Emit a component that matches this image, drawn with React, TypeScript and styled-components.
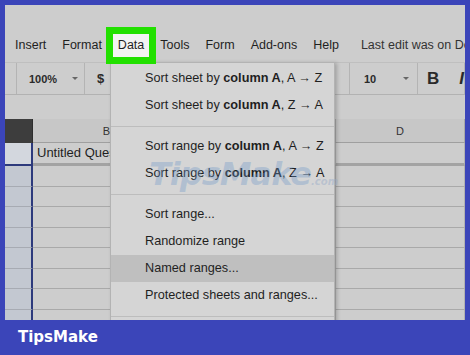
import React from 'react';
import styled, { createGlobalStyle } from 'styled-components';

const GlobalStyle = createGlobalStyle`
  html, body {
    margin: 0;
    padding: 0;
    background: #3b45b9;
  }
  body {
    font-family: 'Liberation Sans', Arial, sans-serif;
  }
`;

const Frame = styled.div`
  width: 470px;
  height: 355px;
  box-sizing: border-box;
  background: #3b45b9;
  padding: 5px 5px 0 5px;
  display: flex;
  flex-direction: column;
`;

const Screen = styled.div`
  position: relative;
  height: 315px;
  flex-shrink: 0;
  overflow: hidden;
  background: #cdcdcd;
  color: #1f1f1f;
  display: flex;
  flex-direction: column;
`;

const MenuBar = styled.div`
  height: 57px;
  flex-shrink: 0;
  box-sizing: border-box;
  padding: 23px 0 0 10px;
  display: flex;
  align-items: center;
  gap: 16px;
  font-size: 12.5px;
  white-space: nowrap;
`;

const MenuLabel = styled.span<{ $active?: boolean; $muted?: boolean }>`
  position: relative;
  z-index: 3;
  line-height: 23px;
  color: ${p => (p.$muted ? '#333' : '#1f1f1f')};
  margin-left: ${p => (p.$muted ? '6px' : '0')};
  ${p =>
    p.$active &&
    `
    border: 7px solid #22e000;
    background: #f3f3f3;
    padding: 0 5px;
    margin: 0 -12px;
  `}
`;

const Toolbar = styled.div`
  height: 33px;
  flex-shrink: 0;
  box-sizing: border-box;
  border-top: 1px solid #bfbfbf;
  border-bottom: 1px solid #b2b2b2;
  display: flex;
`;

const ToolGroup = styled.div<{ $w?: number; $pad?: number; $gap?: number }>`
  ${p => (p.$w ? `width: ${p.$w}px;` : 'flex: 1;')}
  flex-shrink: 0;
  box-sizing: border-box;
  border-right: 1px solid #b4b4b4;
  padding-left: ${p => p.$pad ?? 0}px;
  display: flex;
  align-items: center;
  gap: ${p => p.$gap ?? 0}px;
  white-space: nowrap;
`;

const ToolText = styled.span<{ $size: number; $italic?: boolean }>`
  font-size: ${p => p.$size}px;
  font-weight: bold;
  font-style: ${p => (p.$italic ? 'italic' : 'normal')};
  color: #2a2a2a;
`;

const FormulaBar = styled.div`
  height: 24px;
  flex-shrink: 0;
`;

const Sheet = styled.div`
  display: grid;
  grid-template-columns: 28px 148px 155px 1fr;
  grid-template-rows: 24px 23px repeat(8, 20.5px);
`;

const Corner = styled.div`
  background: #3d3d3d;
  border-right: 1px solid #2e2e2e;
`;

const ColHead = styled.div`
  background: #c7c7c7;
  border-right: 1px solid #a9a9a9;
  border-bottom: 1px solid #9f9f9f;
  box-sizing: border-box;
  display: flex;
  align-items: center;
  justify-content: center;
  font-size: 11px;
  color: #333;
`;

const RowNum = styled.div<{ $first?: boolean }>`
  background: ${p => (p.$first ? '#d3d7de' : '#c3c8d1')};
  border-right: 2px solid #2d3a7c;
  border-bottom: ${p => (p.$first ? '2px solid #2d3a7c' : '1px solid #a7abb3')};
  box-sizing: border-box;
`;

const Cell = styled.div<{ $frozen?: boolean }>`
  border-right: 1px solid #b2b2b2;
  border-bottom: ${p => (p.$frozen ? '3px solid #a3a3a3' : '1px solid #a9a9a9')};
  box-sizing: border-box;
  padding-left: 4px;
  font-size: 13px;
  line-height: 20px;
  white-space: nowrap;
  overflow: hidden;
  color: #1f1f1f;
`;

const Dropdown = styled.div`
  position: absolute;
  left: 105px;
  top: 57px;
  width: 225px;
  height: 280px;
  box-sizing: border-box;
  background: #d5d5d5;
  border: 1px solid #b3b3b3;
  box-shadow: 2px 1px 4px rgba(0, 0, 0, 0.22);
  padding-top: 2px;
  z-index: 2;
`;

const DropItem = styled.div<{ $hover?: boolean }>`
  height: 27px;
  line-height: 27px;
  padding-left: 34px;
  font-size: 12.7px;
  color: #1f1f1f;
  white-space: nowrap;
  background: ${p => (p.$hover ? '#bfbfbf' : 'transparent')};
  b {
    font-weight: bold;
  }
`;

const Separator = styled.div`
  height: 1px;
  margin: 7px 0 6px;
  background: #bdbdbd;
`;

const Watermark = styled.div`
  position: absolute;
  left: 144px;
  top: 150px;
  z-index: 4;
  font-family: 'DejaVu Sans', sans-serif;
  font-size: 32px;
  font-weight: bold;
  font-style: italic;
  letter-spacing: -1px;
  color: rgba(110, 150, 200, 0.35);
  pointer-events: none;
  white-space: nowrap;
  span {
    font-size: 10px;
    letter-spacing: 0;
    color: rgba(150, 170, 200, 0.45);
  }
`;

const Footer = styled.div`
  flex: 1;
  display: flex;
  align-items: center;
  padding-left: 13px;
  padding-bottom: 1px;
  color: #fff;
  font-family: 'DejaVu Sans', sans-serif;
  font-weight: bold;
  font-size: 15px;
`;

const Caret = () => (
  <svg width="6" height="3" viewBox="0 0 6 3">
    <path d="M0 0 H6 L3 3 Z" fill="#666" />
  </svg>
);

const SortItem = ({ lead, dir }: { lead: string; dir: string }) => (
  <DropItem>
    {lead} <b>column A</b>, {dir}
  </DropItem>
);

export default function App() {
  const rows = [2, 3, 4, 5, 6, 7, 8, 9];
  return (
    <>
      <GlobalStyle />
      <Frame>
        <Screen>
          <MenuBar>
            <MenuLabel>Insert</MenuLabel>
            <MenuLabel>Format</MenuLabel>
            <MenuLabel $active>Data</MenuLabel>
            <MenuLabel>Tools</MenuLabel>
            <MenuLabel>Form</MenuLabel>
            <MenuLabel>Add-ons</MenuLabel>
            <MenuLabel>Help</MenuLabel>
            <MenuLabel $muted>Last edit was on December</MenuLabel>
          </MenuBar>

          <Toolbar>
            <ToolGroup $w={12} />
            <ToolGroup $w={68} $pad={12} $gap={15}>
              <ToolText $size={11}>100%</ToolText>
              <Caret />
            </ToolGroup>
            <ToolGroup $w={265} $pad={12}>
              <ToolText $size={13}>$</ToolText>
            </ToolGroup>
            <ToolGroup $w={68} $pad={14} $gap={27}>
              <ToolText $size={11}>10</ToolText>
              <Caret />
            </ToolGroup>
            <ToolGroup $pad={9} $gap={20}>
              <ToolText $size={17}>B</ToolText>
              <ToolText $size={17} $italic>I</ToolText>
            </ToolGroup>
          </Toolbar>

          <FormulaBar />

          <Sheet>
            <Corner />
            <ColHead>B</ColHead>
            <ColHead>C</ColHead>
            <ColHead>D</ColHead>

            <RowNum $first />
            <Cell $frozen>Untitled Question</Cell>
            <Cell $frozen />
            <Cell $frozen />

            {rows.map(r => (
              <React.Fragment key={r}>
                <RowNum />
                <Cell />
                <Cell />
                <Cell />
              </React.Fragment>
            ))}
          </Sheet>

          <Dropdown>
            <SortItem lead="Sort sheet by" dir={'A \u2192 Z'} />
            <SortItem lead="Sort sheet by" dir={'Z \u2192 A'} />
            <Separator />
            <SortItem lead="Sort range by" dir={'A \u2192 Z'} />
            <SortItem lead="Sort range by" dir={'Z \u2192 A'} />
            <Separator />
            <DropItem>Sort range...</DropItem>
            <DropItem>Randomize range</DropItem>
            <DropItem $hover>Named ranges...</DropItem>
            <DropItem>Protected sheets and ranges...</DropItem>
            <Separator />
          </Dropdown>

          <Watermark>
            TipsMake<span>.com</span>
          </Watermark>
        </Screen>
        <Footer>TipsMake</Footer>
      </Frame>
    </>
  );
}
